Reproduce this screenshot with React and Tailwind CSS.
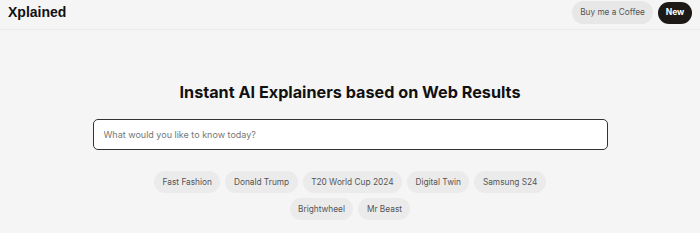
const topics = [
  "Fast Fashion",
  "Donald Trump",
  "T20 World Cup 2024",
  "Digital Twin",
  "Samsung S24",
  "Brightwheel",
  "Mr Beast",
];

function Header() {
  return (
    <header className="flex h-[30px] items-center justify-between border-b border-[#ebebeb] pb-[4px] pl-2 pr-2">
      <span className="font-['Liberation_Sans',Arial,sans-serif] text-[14px] font-bold text-[#111]">
        Xplained
      </span>
      <div className="flex items-center gap-[5px]">
        <button className="h-[23px] w-[81px] rounded-full bg-[#e8e7e7] text-[8.25px] text-[#555]">
          Buy me a Coffee
        </button>
        <button className="h-[22px] w-[34px] rounded-full bg-[#1c1917] text-[8.5px] font-bold text-white">
          New
        </button>
      </div>
    </header>
  );
}

export default function App() {
  return (
    <div className="min-h-screen w-full bg-[#f5f5f5] font-['Inter',sans-serif]">
      <Header />
      <main className="flex flex-col items-center pt-[50px]">
        <h1 className="text-[16.2px] font-bold leading-[24px] text-[#111]">
          Instant AI Explainers based on Web Results
        </h1>
        <input
          type="text"
          autoFocus
          placeholder="What would you like to know today?"
          className="mt-[15px] h-[31px] w-[515px] rounded-[5px] border border-[#333] bg-white px-[10px] text-[9px] text-[#333] outline-none placeholder:text-[#777]"
        />
        <div className="mt-[21px] flex w-[420px] flex-wrap justify-center gap-[5px]">
          {topics.map((t) => (
            <button
              key={t}
              className="h-[22px] rounded-full bg-[#ebebeb] px-[8.5px] text-[8.3px] text-[#555]"
            >
              {t}
            </button>
          ))}
        </div>
      </main>
    </div>
  );
}
